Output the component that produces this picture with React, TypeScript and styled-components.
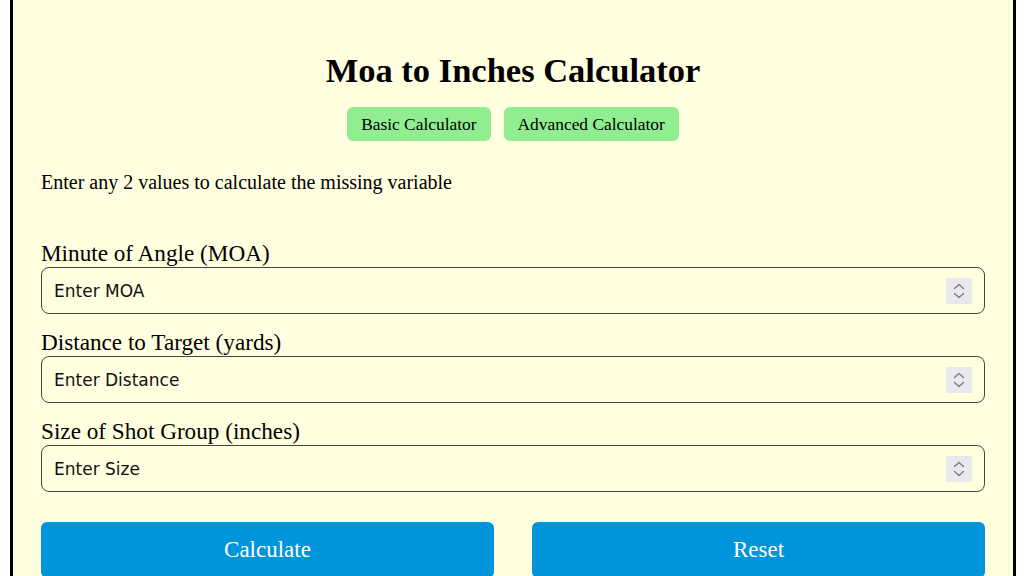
import styled, { createGlobalStyle } from "styled-components";

const GlobalStyle = createGlobalStyle`
  body {
    margin: 0;
    background: #ffffff;
    font-family: "Liberation Serif", "Times New Roman", serif;
  }
`;

const StyledPage = styled.div`
  box-sizing: border-box;
  width: 1006px;
  min-height: 576px;
  margin-left: 10px;
  padding: 51px 28px 0;
  background-color: #ffffe0;
  border-left: 3px solid #000;
  border-right: 3px solid #000;
  color: #000;
`;

const StyledTitle = styled.h1`
  margin: 0;
  font-size: 34.5px;
  line-height: 38px;
  font-weight: 700;
  text-align: center;
`;

const StyledTabs = styled.div`
  display: flex;
  justify-content: center;
  gap: 13px;
  margin-top: 18px;
`;

const StyledTab = styled.button`
  height: 34px;
  padding: 0 14px;
  border: none;
  border-radius: 6px;
  background-color: #90ee90;
  font-family: "Liberation Serif", "Times New Roman", serif;
  font-size: 17.4px;
  color: #000;
`;

const StyledIntro = styled.p`
  margin: 31px 0 48px;
  font-size: 20px;
  line-height: 21px;
`;

const StyledField = styled.div`
  margin-bottom: 16px;
`;

const StyledLabel = styled.label`
  display: block;
  font-size: 23.2px;
  line-height: 25px;
  margin-bottom: 1px;
`;

const StyledInputBox = styled.div`
  box-sizing: border-box;
  display: flex;
  align-items: center;
  height: 47px;
  padding: 0 12px;
  border: 1px solid #444;
  border-radius: 8px;
`;

const StyledInput = styled.input`
  flex: 1;
  min-width: 0;
  border: none;
  outline: none;
  background: transparent;
  padding: 0;
  font-family: "DejaVu Sans", Tahoma, sans-serif;
  font-size: 17px;
  color: #000;

  &::placeholder {
    color: #111;
  }
`;

const StyledSpinner = styled.div`
  width: 26px;
  height: 26px;
  display: flex;
  align-items: center;
  justify-content: center;
  background-color: #e9e9ed;
`;

const StyledActions = styled.div`
  display: grid;
  grid-template-columns: 1fr 1fr;
  gap: 38px;
  margin-top: 30px;
`;

const StyledAction = styled.button`
  height: 56px;
  border: none;
  border-radius: 6px;
  background-color: #0094da;
  color: #fff;
  font-family: "Liberation Serif", "Times New Roman", serif;
  font-size: 23px;
`;

function Spinner() {
  return (
    <StyledSpinner>
      <svg width="14" height="20" viewBox="0 0 14 20" fill="none" stroke="#808080" strokeWidth="1.5" strokeLinecap="round" strokeLinejoin="round">
        <path d="M2.5 7.5 L7 3.5 L11.5 7.5" />
        <path d="M2.5 12.5 L7 16.5 L11.5 12.5" />
      </svg>
    </StyledSpinner>
  );
}

const fields = [
  { label: "Minute of Angle (MOA)", placeholder: "Enter MOA" },
  { label: "Distance to Target (yards)", placeholder: "Enter Distance" },
  { label: "Size of Shot Group (inches)", placeholder: "Enter Size" },
];

export default function App() {
  return (
    <>
      <GlobalStyle />
      <StyledPage>
        <StyledTitle>Moa to Inches Calculator</StyledTitle>
        <StyledTabs>
          <StyledTab>Basic Calculator</StyledTab>
          <StyledTab>Advanced Calculator</StyledTab>
        </StyledTabs>
        <StyledIntro>Enter any 2 values to calculate the missing variable</StyledIntro>
        {fields.map((f) => (
          <StyledField key={f.label}>
            <StyledLabel>{f.label}</StyledLabel>
            <StyledInputBox>
              <StyledInput placeholder={f.placeholder} />
              <Spinner />
            </StyledInputBox>
          </StyledField>
        ))}
        <StyledActions>
          <StyledAction>Calculate</StyledAction>
          <StyledAction>Reset</StyledAction>
        </StyledActions>
      </StyledPage>
    </>
  );
}
